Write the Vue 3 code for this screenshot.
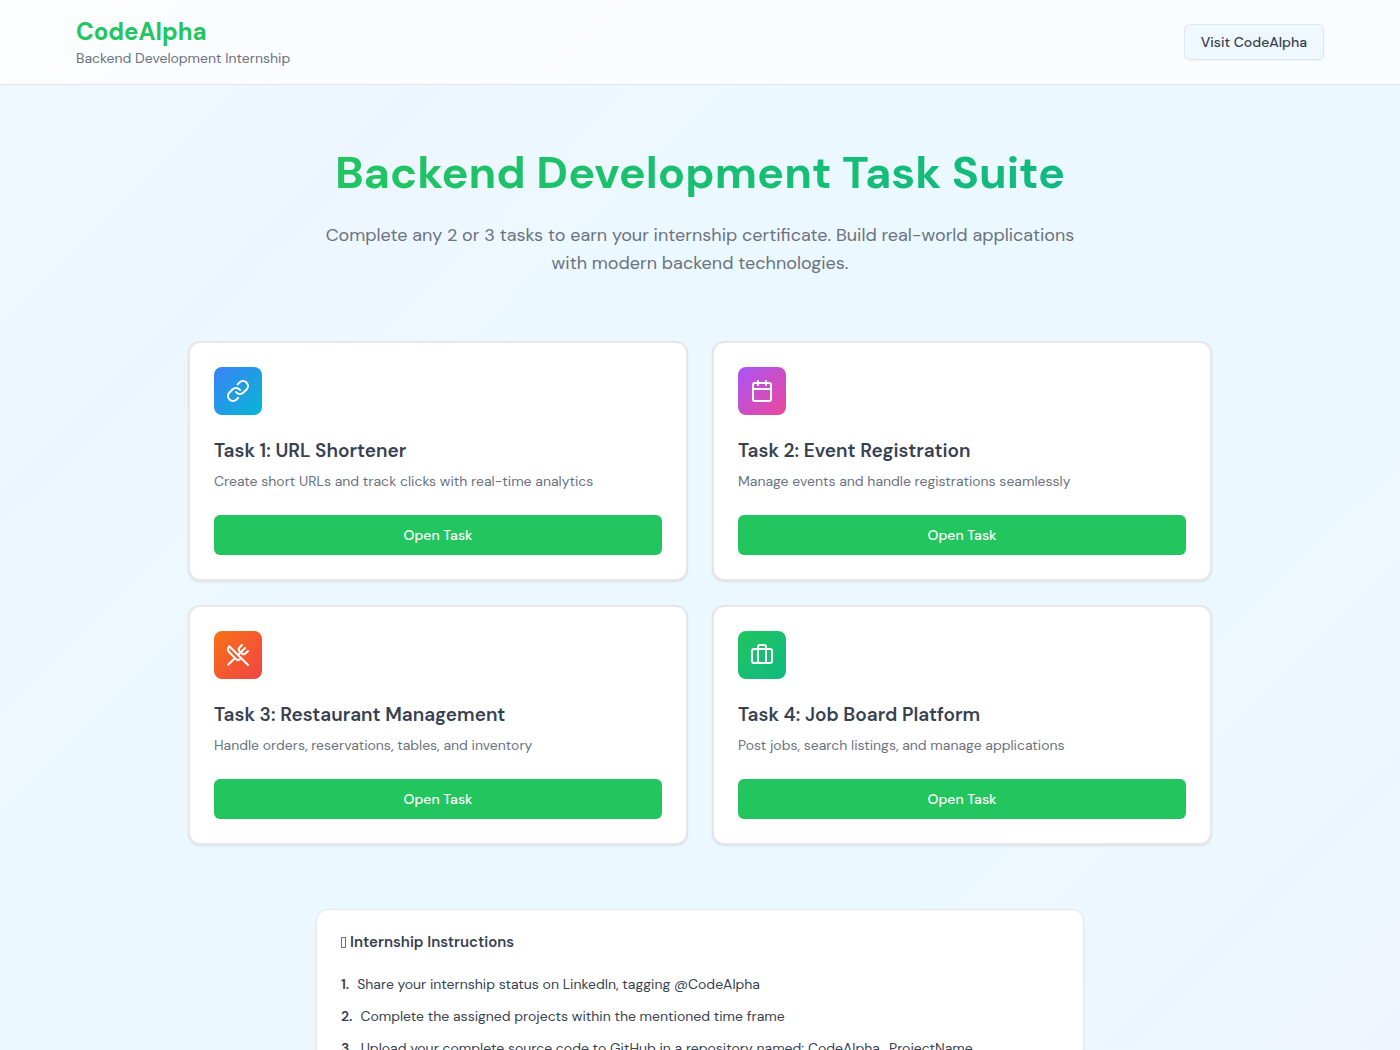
<template>
  <div class="page">
    <header class="site-header">
      <div class="header-inner">
        <div>
          <div class="brand">CodeAlpha</div>
          <p class="brand-sub">Backend Development Internship</p>
        </div>
        <a href="#" class="visit-btn">Visit CodeAlpha</a>
      </div>
    </header>

    <main class="main">
      <div class="hero">
        <h1 class="hero-title">Backend Development Task Suite</h1>
        <p class="hero-text">
          Complete any 2 or 3 tasks to earn your internship certificate. Build real-world applications with modern backend technologies.
        </p>
      </div>

      <div class="tasks-grid">
        <article v-for="task in tasks" :key="task.id" class="task-card">
          <div :class="['task-icon', task.color]">
            <svg viewBox="0 0 24 24" aria-hidden="true">
              <path v-for="d in task.paths" :key="d" :d="d" />
            </svg>
          </div>
          <h3 class="task-title">{{ task.title }}</h3>
          <p class="task-desc">{{ task.desc }}</p>
          <button type="button" class="open-btn">Open Task</button>
        </article>
      </div>

      <section class="instructions">
        <h3 class="instructions-title"><span class="marker"></span>Internship Instructions</h3>
        <ul class="steps">
          <li v-for="(step, i) in steps" :key="step">
            <strong>{{ i + 1 }}.</strong>
            <span>{{ step }}</span>
          </li>
        </ul>
      </section>
    </main>
  </div>
</template>

<script setup>
const tasks = [
  {
    id: 1,
    title: 'Task 1: URL Shortener',
    desc: 'Create short URLs and track clicks with real-time analytics',
    color: 'blue',
    paths: [
      'M10 13a5 5 0 0 0 7.54.54l3-3a5 5 0 0 0-7.07-7.07l-1.72 1.71',
      'M14 11a5 5 0 0 0-7.54-.54l-3 3a5 5 0 0 0 7.07 7.07l1.71-1.71',
    ],
  },
  {
    id: 2,
    title: 'Task 2: Event Registration',
    desc: 'Manage events and handle registrations seamlessly',
    color: 'purple',
    paths: [
      'M8 2v4',
      'M16 2v4',
      'M5 4h14a2 2 0 0 1 2 2v14a2 2 0 0 1-2 2H5a2 2 0 0 1-2-2V6a2 2 0 0 1 2-2z',
      'M3 10h18',
    ],
  },
  {
    id: 3,
    title: 'Task 3: Restaurant Management',
    desc: 'Handle orders, reservations, tables, and inventory',
    color: 'orange',
    paths: [
      'm16 2-2.3 2.3a3 3 0 0 0 0 4.2l1.8 1.8a3 3 0 0 0 4.2 0L22 8',
      'M15 15 3.3 3.3a4.2 4.2 0 0 0 0 6l7.3 7.3c.7.7 2 .7 2.8 0L15 15Zm0 0 7 7',
      'm2.1 21.8 6.4-6.3',
      'm19 5-7 7',
    ],
  },
  {
    id: 4,
    title: 'Task 4: Job Board Platform',
    desc: 'Post jobs, search listings, and manage applications',
    color: 'green',
    paths: [
      'M16 20V4a2 2 0 0 0-2-2h-4a2 2 0 0 0-2 2v16',
      'M4 6h16a2 2 0 0 1 2 2v10a2 2 0 0 1-2 2H4a2 2 0 0 1-2-2V8a2 2 0 0 1 2-2z',
    ],
  },
];

const steps = [
  'Share your internship status on LinkedIn, tagging @CodeAlpha',
  'Complete the assigned projects within the mentioned time frame',
  'Upload your complete source code to GitHub in a repository named: CodeAlpha_ProjectName',
];
</script>

<style>
body {
  margin: 0;
}
</style>

<style scoped>
.page {
  min-height: 100vh;
  background: linear-gradient(135deg, #f0f9ff 0%, #eef6ff 15%, #ecf8ff 35%, #ecf8ff 70%, #eff5ff 100%);
  color: #374151;
  font-family: 'DM Sans', Inter, sans-serif;
}

h1, h3, p, ul {
  margin: 0;
  padding: 0;
}

.site-header {
  background: rgba(255, 255, 255, 0.7);
  border-bottom: 1px solid #e0e5eb;
}

.header-inner {
  max-width: 1280px;
  margin: 0 auto;
  padding: 16px;
  box-sizing: border-box;
  display: flex;
  align-items: center;
  justify-content: space-between;
}

.brand {
  font-size: 24px;
  line-height: 32px;
  font-weight: 700;
  color: #22c55e;
}

.brand-sub {
  font-size: 14px;
  line-height: 20px;
  color: #6b7280;
}

.visit-btn {
  padding: 7px 16px;
  border: 1px solid #dfe6ef;
  border-radius: 6px;
  background: #f0f8ff;
  box-shadow: 0 1px 2px rgba(0, 0, 0, 0.05);
  color: #374151;
  font-size: 14px;
  line-height: 20px;
  font-weight: 500;
  text-decoration: none;
}

.main {
  max-width: 1280px;
  margin: 0 auto;
  padding: 64px 16px;
  box-sizing: border-box;
}

.hero {
  max-width: 768px;
  margin: 0 auto 64px;
  text-align: center;
}

.hero-title {
  margin-bottom: 24px;
  font-size: 45px;
  line-height: 48px;
  font-weight: 700;
  background: linear-gradient(90deg, #22c55e, #10b981);
  -webkit-background-clip: text;
  background-clip: text;
  color: transparent;
}

.hero-text {
  font-size: 18px;
  line-height: 28px;
  color: #6b7280;
}

.tasks-grid {
  max-width: 1024px;
  margin: 0 auto 64px;
  display: grid;
  grid-template-columns: repeat(2, 1fr);
  gap: 24px;
}

.task-card {
  padding: 24px;
  border: 2px solid #e5e7eb;
  border-radius: 12px;
  background: #fff;
  box-shadow: 0 1px 2px rgba(0, 0, 0, 0.1);
}

.task-icon {
  width: 48px;
  height: 48px;
  margin-bottom: 22px;
  border-radius: 8px;
  display: flex;
  align-items: center;
  justify-content: center;
}

.task-icon svg {
  width: 24px;
  height: 24px;
  fill: none;
  stroke: #fff;
  stroke-width: 2;
  stroke-linecap: round;
  stroke-linejoin: round;
}

.blue { background: linear-gradient(135deg, #3b82f6, #06b6d4); }
.purple { background: linear-gradient(135deg, #a855f7, #ec4899); }
.orange { background: linear-gradient(135deg, #f97316, #ef4444); }
.green { background: linear-gradient(135deg, #22c55e, #10b981); }

.task-title {
  margin-bottom: 6px;
  font-size: 19px;
  line-height: 28px;
  font-weight: 600;
}

.task-desc {
  margin-bottom: 24px;
  font-size: 14px;
  line-height: 20px;
  color: #6b7280;
}

.open-btn {
  display: block;
  width: 100%;
  height: 40px;
  border: 0;
  border-radius: 6px;
  background: #22c55e;
  color: #fff;
  font-family: inherit;
  font-size: 14px;
  font-weight: 500;
  cursor: pointer;
}

.instructions {
  max-width: 768px;
  margin: 0 auto;
  padding: 24px;
  box-sizing: border-box;
  border: 1px solid #e5e7eb;
  border-radius: 12px;
  background: #fff;
  box-shadow: 0 1px 2px rgba(0, 0, 0, 0.05);
}

.instructions-title {
  margin-bottom: 24px;
  display: flex;
  align-items: center;
  gap: 4px;
  font-size: 15px;
  line-height: 16px;
  font-weight: 600;
}

.marker {
  width: 5px;
  height: 11px;
  box-sizing: border-box;
  border: 1px solid #6b7280;
}

.steps {
  list-style: none;
  display: flex;
  flex-direction: column;
  gap: 12px;
  font-size: 14px;
  line-height: 20px;
}

.steps li {
  display: flex;
  gap: 8px;
}

.steps strong {
  font-weight: 600;
}

@media (max-width: 768px) {
  .tasks-grid { grid-template-columns: 1fr; }
  .hero-title { font-size: 36px; line-height: 40px; }
}
</style>
